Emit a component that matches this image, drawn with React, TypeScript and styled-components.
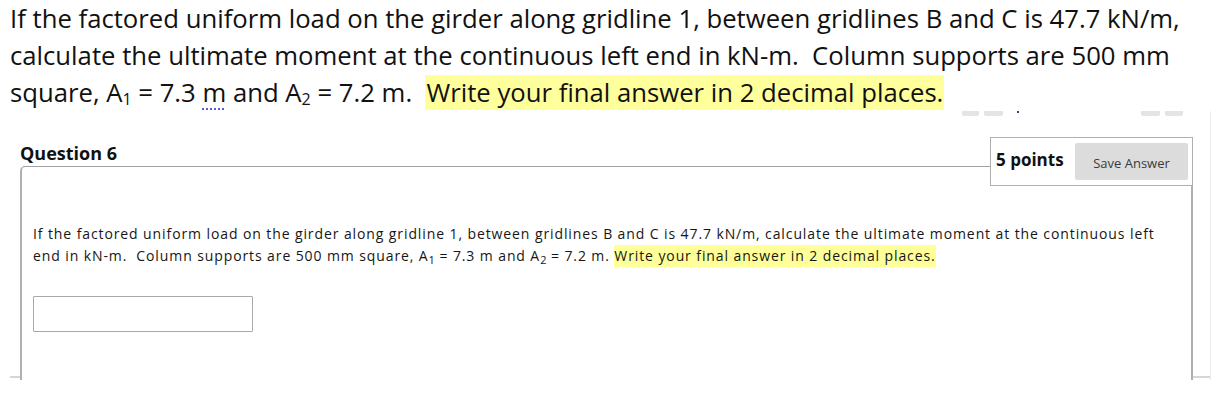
import React from "react";
import styled, { createGlobalStyle } from "styled-components";

const Global = createGlobalStyle`
  html, body { margin: 0; padding: 0; background: #fff; }
  body { font-family: "Open Sans", "DejaVu Sans", sans-serif; color: #111; }
`;

const Page = styled.div`
  width: 1219px;
  height: 412px;
  overflow: hidden;
`;

const Prompt = styled.p`
  margin: 0;
  padding: 0 10px;
  font-size: 25.7px;
  line-height: 37px;
  color: #111;
  white-space: nowrap;
  sub { font-size: 16px; line-height: 0; vertical-align: -3px; }
`;

const Spell = styled.span`
  text-decoration: underline dotted #5b5bd6;
  text-underline-offset: 6px;
  text-decoration-thickness: 2px;
`;

const Mark = styled.mark<{ $small?: boolean }>`
  background: ${(p) => (p.$small ? "#ffff99" : "#ffff9c")};
  color: inherit;
  padding: ${(p) => (p.$small ? "1px 0 2px" : "0 1px")};
`;

const Frame = styled.div`
  margin-left: 10px;
  width: 1200px;
  height: 269px;
  overflow: hidden;
  border-right: 1px solid #ececec;
  background: linear-gradient(#d6d6d6, #d6d6d6) left bottom 2px / 100% 2px no-repeat;
`;

const DashRow = styled.div`
  display: flex;
  align-items: flex-start;
  height: 6px;
  padding-left: 952px;
`;

const Dash = styled.span<{ $w: number; $ml: number }>`
  width: ${(p) => p.$w}px;
  height: 5px;
  margin-left: ${(p) => p.$ml}px;
  background: #e4e4e4;
  border-radius: 0 0 2px 2px;
`;

const Dot = styled.span`
  width: 2px;
  height: 2px;
  margin-left: 14px;
  background: #2a3e7a;
`;

const Question = styled.div`
  margin-left: 10px;
  width: 1173px;
`;

const Title = styled.div`
  font-weight: 700;
  font-size: 18px;
  line-height: 22px;
  padding-top: 25px;
  height: 24px;
  color: #111;
`;

const Body = styled.div`
  position: relative;
  border-top: 1px solid #a2a2a2;
  border-left: 2px solid #b0b0b0;
  border-right: 2px solid #b0b0b0;
  border-top-left-radius: 5px;
  background: #fff;
  height: 240px;
  padding: 56px 12px 0 11px;
  box-sizing: border-box;
`;

const PointsBox = styled.div`
  position: absolute;
  top: -30px;
  right: -2px;
  width: 192px;
  height: 47px;
  border: 1px solid #b0b0b0;
  background: #fff;
  display: flex;
  align-items: center;
  padding: 0 4px 0 5px;
  box-sizing: content-box;
`;

const Points = styled.span`
  font-weight: 700;
  font-size: 17px;
  color: #111;
  flex: 1;
  margin-top: -5px;
`;

const SaveButton = styled.button`
  width: 113px;
  height: 37px;
  border: none;
  border-radius: 2px;
  background: #dcdcdc;
  font-family: "Open Sans", "DejaVu Sans", sans-serif;
  font-size: 13px;
  color: #3a3a3a;
  padding: 2px 0 0;
`;

const QuestionText = styled.p`
  margin: 0;
  font-size: 14px;
  letter-spacing: 0.9px;
  line-height: 22px;
  color: #161616;
  white-space: nowrap;
  sub { font-size: 11px; line-height: 0; vertical-align: -3px; letter-spacing: 0; }
`;

const Answer = styled.input`
  display: block;
  margin-top: 29px;
  width: 220px;
  height: 36px;
  box-sizing: border-box;
  border: 1px solid #a9a9a9;
  border-radius: 1px;
  background: #fff;
`;

export default function App() {
  return (
    <Page>
      <Global />
      <Prompt>
        If the factored uniform load on the girder along gridline 1, between gridlines B and C is 47.7 kN/m,
        <br />
        calculate the ultimate moment at the continuous left end in kN-m.&nbsp; Column supports are 500 mm
        <br />
        square, A<sub>1</sub> = 7.3 <Spell>m</Spell> and A<sub>2</sub> = 7.2 m.&nbsp;{" "}
        <Mark>Write your final answer in 2 decimal places.</Mark>
      </Prompt>
      <Frame>
        <DashRow>
          <Dash $w={17} $ml={0} />
          <Dash $w={19} $ml={5} />
          <Dot />
          <Dash $w={19} $ml={122} />
          <Dash $w={18} $ml={5} />
        </DashRow>
        <Question>
          <Title>Question 6</Title>
          <Body>
            <PointsBox>
              <Points>5 points</Points>
              <SaveButton>Save Answer</SaveButton>
            </PointsBox>
            <QuestionText>
              If the factored uniform load on the girder along gridline 1, between gridlines B and C is 47.7 kN/m,
              calculate the ultimate moment at the continuous left
              <br />
              end in kN-m.&nbsp; Column supports are 500 mm square, A<sub>1</sub> = 7.3 m and A<sub>2</sub> = 7.2
              m. <Mark $small>Write your final answer in 2 decimal places.</Mark>
            </QuestionText>
            <Answer type="text" aria-label="Answer" />
          </Body>
        </Question>
      </Frame>
    </Page>
  );
}
